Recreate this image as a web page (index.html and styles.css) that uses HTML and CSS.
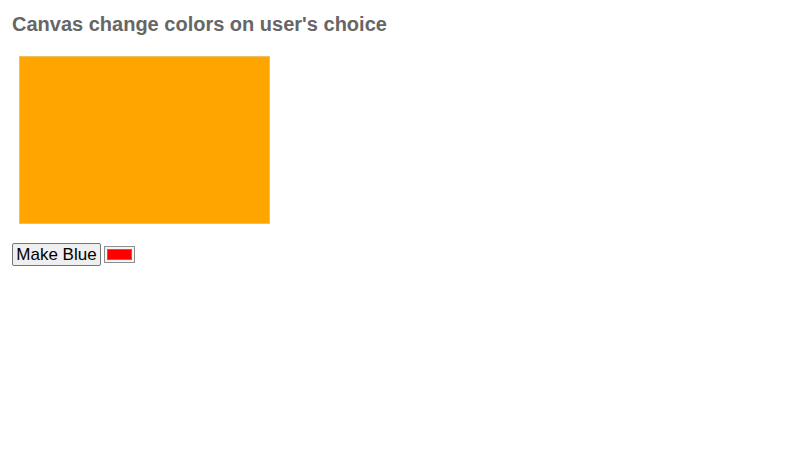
FILE: index.html
```html
<!DOCTYPE html>
<html>
<head>
<meta charset="utf-8">
<link rel="stylesheet" href="styles.css">
</head>
<body>
<h1 class="title">Canvas change colors on user's choice</h1>
<div class="canvas"></div>
<div class="controls">
  <button class="btn">Make Blue</button>
  <span class="swatch"><span class="swatch-fill"></span></span>
</div>
</body>
</html>
```
FILE: styles.css
```css
body {
  margin: 12px;
  font-family: "Liberation Sans", Arial, sans-serif;
}
.title {
  font-size: 20px;
  font-weight: bold;
  color: #666;
  margin: 0 0 20px 0;
  line-height: 24px;
}
.canvas {
  margin-left: 7px;
  background: #ffa500;
  border: 1px solid #f0c060;
  box-sizing: border-box;
  width: 251px;
  height: 168px;
}
.controls {
  margin-top: 19px;
  display: flex;
  align-items: center;
  gap: 3px;
}
.btn {
  font-family: "Liberation Sans", Arial, sans-serif;
  font-size: 17px;
  width: 89px;
  height: 23px;
  padding: 0;
  background: #efefef;
  border: 1px solid #767676;
  border-radius: 2px;
  color: #000;
  line-height: 19px;
  text-align: center;
}
.swatch {
  width: 31px;
  height: 17px;
  box-sizing: border-box;
  border: 1px solid #8f8f8f;
  background: #f4f4f4;
  padding: 2px;
  display: flex;
}
.swatch-fill {
  flex: 1;
  background: #ff0000;
  border: 1px solid #777;
}
```
